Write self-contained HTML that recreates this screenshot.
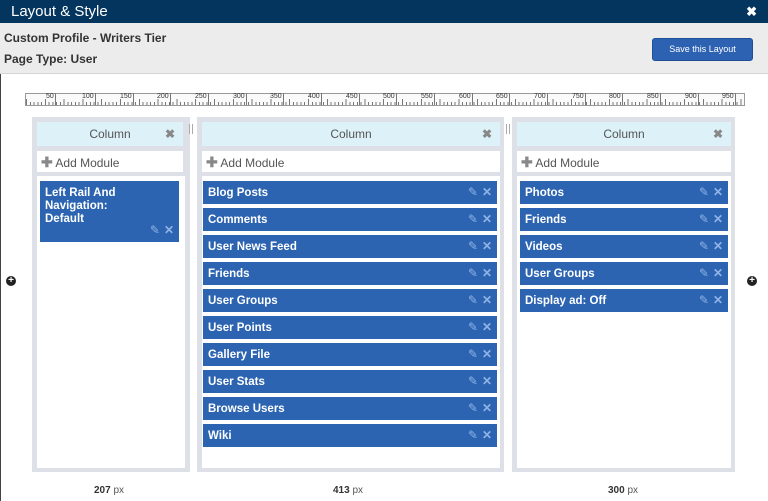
<!DOCTYPE html>
<html><head><style>
*{box-sizing:border-box;margin:0;padding:0}
body{width:768px;height:501px;overflow:hidden;background:#fff;font-family:"Liberation Sans",sans-serif;position:relative}
.lb{position:absolute;left:0;top:0;width:1px;height:501px;background:#444}
.hdr{position:absolute;left:0;top:0;width:768px;height:23px;background:#04355e;color:#fff;font-size:15px;line-height:23px;padding-left:11px}
.hdr .x{position:absolute;right:11px;top:0;font-size:13px;font-weight:bold}
.sub{position:absolute;left:0;top:23px;width:768px;height:51px;background:#ececec;border-bottom:1px solid #d6d6d6;font-size:12px;font-weight:bold;color:#333}
.sub .a{position:absolute;left:4px;top:8px}
.sub .b{position:absolute;left:4px;top:29px}
.btn{position:absolute;left:652px;top:15px;width:101px;height:23px;background:#2c62b1;border:1px solid #1f4f95;border-radius:3px;color:#fff;font-size:9px;font-weight:normal;text-align:center;line-height:21px}
.ruler{position:absolute;left:25px;top:93px;width:720px;height:13px;border:1px solid #999;background-color:#fafafa;
background-image:repeating-linear-gradient(90deg,#777 0 1px,transparent 1px 3.76px),repeating-linear-gradient(90deg,#777 0 1px,transparent 1px 18.8px);background-size:100% 3px,100% 6px;background-repeat:no-repeat;background-position:0 100%,0 100%}
.ruler span{position:absolute;top:-1px;font-size:7px;color:#333;border-right:1px solid #777;padding-right:1px;height:12px;line-height:8px}
.col{position:absolute;top:117px;height:355px;background:#dde0e6}
.ch{position:absolute;top:5px;height:24px;background:#dcf1f8;color:#555;font-size:12px;text-align:center;line-height:25px}
.ch i{position:absolute;right:8px;top:0;font-style:normal;color:#888;font-size:12px;font-weight:bold}
.am{position:absolute;top:34px;height:21px;background:#fff;color:#555;font-size:12px;line-height:22px;padding-left:4px}
.am b{color:#888;font-size:14px}
.bd{position:absolute;top:59px;bottom:4px;background:#fff}
.m{position:absolute;background:#2c64b2;color:#fff;font-size:11.5px;font-weight:bold;height:23px;line-height:25px;padding-left:5px}
.ic{position:absolute;right:5px;top:0;color:#8fb3e6;font-size:12px;font-weight:bold;line-height:23px}
.ic s{text-decoration:none;font-weight:normal;margin-right:4px}
.grip{position:absolute;top:124px;width:4px;height:10px;border-left:1px solid #aaa;border-right:1px solid #aaa}
.plus{position:absolute;top:276px;width:10px;height:10px;border-radius:50%;background:#222;color:#fff;font-size:10px;line-height:10px;text-align:center;font-weight:bold}
.ft{position:absolute;top:485px;font-size:10px;color:#555}
.ft b{color:#333}
</style></head><body>
<div class="lb"></div>
<div class="hdr">Layout &amp; Style<span class="x">✖</span></div>
<div class="sub"><div class="a">Custom Profile - Writers Tier</div><div class="b">Page Type: User</div><div class="btn">Save this Layout</div></div>
<div class="ruler">
<span style="left:20px">50</span><span style="left:56px">100</span><span style="left:94px">150</span><span style="left:131px">200</span><span style="left:169px">250</span><span style="left:207px">300</span><span style="left:244px">350</span><span style="left:282px">400</span><span style="left:320px">450</span><span style="left:357px">500</span><span style="left:395px">550</span><span style="left:433px">600</span><span style="left:470px">650</span><span style="left:508px">700</span><span style="left:546px">750</span><span style="left:583px">800</span><span style="left:621px">850</span><span style="left:659px">900</span><span style="left:696px">950</span>
</div>

<div class="col" style="left:32px;width:158px">
<div class="ch" style="left:5px;width:146px">Column<i>✖</i></div>
<div class="am" style="left:5px;width:146px"><b>✚</b> Add Module</div>
<div class="bd" style="left:5px;width:148px"></div>
<div class="m" style="left:8px;top:64px;width:139px;height:61px;line-height:13px;padding-top:6px">Left Rail And<br>Navigation:<br>Default<span class="ic" style="top:38px"><s>✎</s>✕</span></div>
</div>
<div class="grip" style="left:189px"></div>

<div class="col" style="left:197px;width:307px">
<div class="ch" style="left:5px;width:298px">Column<i>✖</i></div>
<div class="am" style="left:5px;width:298px"><b>✚</b> Add Module</div>
<div class="bd" style="left:5px;width:298px"></div>
<div class="m" style="left:6px;top:64px;width:294px">Blog Posts<span class="ic"><s>✎</s>✕</span></div>
<div class="m" style="left:6px;top:91px;width:294px">Comments<span class="ic"><s>✎</s>✕</span></div>
<div class="m" style="left:6px;top:118px;width:294px">User News Feed<span class="ic"><s>✎</s>✕</span></div>
<div class="m" style="left:6px;top:145px;width:294px">Friends<span class="ic"><s>✎</s>✕</span></div>
<div class="m" style="left:6px;top:172px;width:294px">User Groups<span class="ic"><s>✎</s>✕</span></div>
<div class="m" style="left:6px;top:199px;width:294px">User Points<span class="ic"><s>✎</s>✕</span></div>
<div class="m" style="left:6px;top:226px;width:294px">Gallery File<span class="ic"><s>✎</s>✕</span></div>
<div class="m" style="left:6px;top:253px;width:294px">User Stats<span class="ic"><s>✎</s>✕</span></div>
<div class="m" style="left:6px;top:280px;width:294px">Browse Users<span class="ic"><s>✎</s>✕</span></div>
<div class="m" style="left:6px;top:307px;width:294px">Wiki<span class="ic"><s>✎</s>✕</span></div>
</div>
<div class="grip" style="left:506px"></div>

<div class="col" style="left:512px;width:223px">
<div class="ch" style="left:5px;width:214px">Column<i>✖</i></div>
<div class="am" style="left:5px;width:214px"><b>✚</b> Add Module</div>
<div class="bd" style="left:5px;width:214px"></div>
<div class="m" style="left:8px;top:64px;width:208px">Photos<span class="ic"><s>✎</s>✕</span></div>
<div class="m" style="left:8px;top:91px;width:208px">Friends<span class="ic"><s>✎</s>✕</span></div>
<div class="m" style="left:8px;top:118px;width:208px">Videos<span class="ic"><s>✎</s>✕</span></div>
<div class="m" style="left:8px;top:145px;width:208px">User Groups<span class="ic"><s>✎</s>✕</span></div>
<div class="m" style="left:8px;top:172px;width:208px">Display ad: Off<span class="ic"><s>✎</s>✕</span></div>
</div>

<div class="plus" style="left:6px">+</div>
<div class="plus" style="left:747px">+</div>
<div class="ft" style="left:94px"><b>207</b> px</div>
<div class="ft" style="left:333px"><b>413</b> px</div>
<div class="ft" style="left:608px"><b>300</b> px</div>
</body></html>
